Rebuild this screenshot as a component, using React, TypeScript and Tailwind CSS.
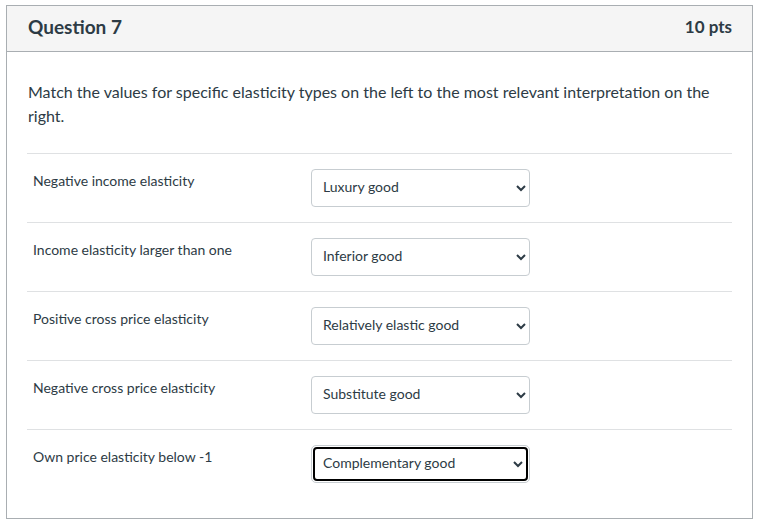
import { useState } from "react";

const options = [
  "[ Choose ]",
  "Luxury good",
  "Inferior good",
  "Relatively elastic good",
  "Substitute good",
  "Complementary good",
];

const initialRows = [
  { label: "Negative income elasticity", value: "Luxury good" },
  { label: "Income elasticity larger than one", value: "Inferior good" },
  { label: "Positive cross price elasticity", value: "Relatively elastic good" },
  { label: "Negative cross price elasticity", value: "Substitute good" },
  { label: "Own price elasticity below -1", value: "Complementary good" },
];

export default function App() {
  const [rows, setRows] = useState(initialRows);

  const update = (index: number, value: string) => {
    setRows((prev) => prev.map((r, i) => (i === index ? { ...r, value } : r)));
  };

  return (
    <div className="min-h-screen bg-white pl-[6px] pr-[4px] pt-[5px] font-['Lato',sans-serif] text-[#2d3b45]">
      <div className="border border-[#a9aeb2]">
        <div className="flex h-[46px] items-center justify-between border-b border-[#a9aeb2] bg-[#f5f5f5] pb-[3px] pl-[21px] pr-[20px]">
          <h2 className="text-[19px] font-bold">Question 7</h2>
          <span className="text-[17px] font-bold">10 pts</span>
        </div>

        <div className="px-[20px] pb-[20px] pt-[28px]">
          <p className="pl-[1px] text-[16px] leading-[24px]">
            Match the values for specific elasticity types on the left to the most relevant interpretation on the right.
          </p>

          <div className="mt-[25px]">
            {rows.map((row, i) => (
              <div key={row.label} className="flex h-[69px] items-start border-t border-[#dfe1e3] pt-[15px]">
                <div className="mt-[2px] w-[284px] pl-[6px] text-[14px] leading-[20px]">{row.label}</div>
                {i === rows.length - 1 ? (
                  <div className="rounded-[5px] border border-[#c7cdd1] p-px">
                    <select
                      value={row.value}
                      onChange={(e) => update(i, e.target.value)}
                      className="h-[34px] w-[215px] rounded-[4px] border-2 border-black bg-white pb-[4px] pl-[4px] text-[14px] text-[#2d3b45]"
                    >
                      {options.map((o) => (
                        <option key={o} value={o}>
                          {o}
                        </option>
                      ))}
                    </select>
                  </div>
                ) : (
                  <select
                    value={row.value}
                    onChange={(e) => update(i, e.target.value)}
                    className="h-[38px] w-[219px] rounded-[4px] border border-[#c7cdd1] bg-white pb-[4px] pl-[7px] text-[14px] text-[#2d3b45]"
                  >
                    {options.map((o) => (
                      <option key={o} value={o}>
                        {o}
                      </option>
                    ))}
                  </select>
                )}
              </div>
            ))}
          </div>
        </div>
      </div>
    </div>
  );
}
